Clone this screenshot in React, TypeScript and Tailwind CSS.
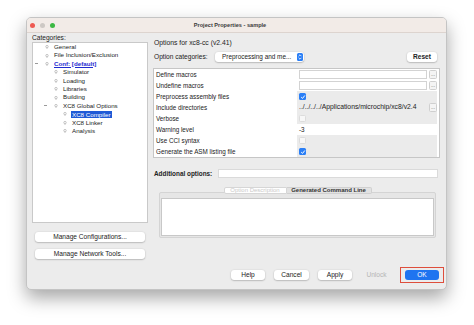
import React from "react"

type Node = { label: string; level: number; toggle?: boolean; link?: boolean; selected?: boolean }

const tree: Node[] = [
  { label: "General", level: 0 },
  { label: "File Inclusion/Exclusion", level: 0 },
  { label: "Conf: [default]", level: 0, toggle: true, link: true },
  { label: "Simulator", level: 1 },
  { label: "Loading", level: 1 },
  { label: "Libraries", level: 1 },
  { label: "Building", level: 1 },
  { label: "XC8 Global Options", level: 1, toggle: true },
  { label: "XC8 Compiler", level: 2, selected: true },
  { label: "XC8 Linker", level: 2 },
  { label: "Analysis", level: 2 },
]

const indent = ["pl-0", "pl-[9px]", "pl-[18px]"]

function TreeRow({ node }: { node: Node }) {
  return (
    <div className={`flex items-center h-[8.4px] ${indent[node.level]}`}>
      <span className="w-[7px] flex justify-center">
        {node.toggle && <span className="block w-[3px] h-[1px] bg-[#9a9a9a]" />}
      </span>
      <span className="w-[14px] flex">
        <svg viewBox="0 0 4 4" className="ml-[5px] w-[4px] h-[4px]">
          <circle cx="2" cy="1.6" r="1.2" stroke="#a0a0a0" strokeWidth="0.6" fill="none" />
          <path d="M2 2.8 V4" stroke="#a0a0a0" strokeWidth="0.5" />
        </svg>
      </span>
      <span
        className={
          node.selected
            ? "bg-[#1f5ad6] text-white px-[1px] -ml-[1px] leading-[7px]"
            : node.link
            ? "text-[#1f2bd0] font-bold underline"
            : "text-[#222]"
        }
      >
        {node.label}
      </span>
    </div>
  )
}

function Btn({ children, className = "" }: { children: React.ReactNode; className?: string }) {
  return (
    <div
      className={`h-[10px] flex items-center justify-center rounded-[3px] bg-white shadow-[0_0.5px_1.5px_rgba(0,0,0,0.35)] text-[6.6px] text-[#222] ${className}`}
    >
      {children}
    </div>
  )
}

function Check({ on }: { on: boolean }) {
  if (!on) return <span className="block w-[7px] h-[7px] rounded-[1.5px] bg-[#f7f7f7] border border-[#dcdcdc]" />
  return (
    <span className="flex w-[7px] h-[7px] rounded-[1.5px] bg-[#2b7ff6] items-center justify-center">
      <svg viewBox="0 0 6 6" className="w-[6px] h-[6px]">
        <path d="M1.2 3.1 L2.5 4.4 L4.8 1.5" stroke="white" strokeWidth="1" fill="none" />
      </svg>
    </span>
  )
}

function Dots() {
  return (
    <span className="ml-[2px] shrink-0 w-[8px] h-[9px] rounded-[1.5px] border border-[#cfcfcf] bg-[#f4f4f4] flex items-center justify-center text-[5px] leading-none text-[#555]">
      ...
    </span>
  )
}

function Field() {
  return (
    <div className="flex items-center w-full min-w-0">
      <span className="flex-1 h-[9px] bg-white border border-[#d3d3d3]" />
      <Dots />
    </div>
  )
}

type Prop = { name: string; kind: "field" | "check" | "text" | "dir"; on?: boolean; value?: string }

const props: Prop[] = [
  { name: "Define macros", kind: "field" },
  { name: "Undefine macros", kind: "field" },
  { name: "Preprocess assembly files", kind: "check", on: true },
  { name: "Include directories", kind: "dir", value: "../../../../Applications/microchip/xc8/v2.4" },
  { name: "Verbose", kind: "check", on: false },
  { name: "Warning level", kind: "text", value: "-3" },
  { name: "Use CCI syntax", kind: "check", on: false },
  { name: "Generate the ASM listing file", kind: "check", on: true },
]

function PropRow({ p }: { p: Prop }) {
  const grey = p.kind === "check" || p.kind === "dir"
  return (
    <div className="flex h-[11px]">
      <div className="w-[143px] shrink-0 pl-[2px] flex items-center text-[#222]">{p.name}</div>
      <div className={`flex-1 min-w-0 flex items-center pl-[2px] ${grey ? "bg-[#ebebeb]" : "bg-white"}`}>
        {p.kind === "field" && <Field />}
        {p.kind === "check" && <Check on={!!p.on} />}
        {p.kind === "text" && <span className="text-[#222]">{p.value}</span>}
        {p.kind === "dir" && (
          <div className="flex items-center w-full min-w-0">
            <span className="flex-1 min-w-0 overflow-hidden whitespace-nowrap text-[6.8px] text-[#222]">{p.value}</span>
            <Dots />
          </div>
        )}
      </div>
    </div>
  )
}

export default function App() {
  return (
    <div className="w-[474px] h-[325px] bg-white overflow-hidden font-['Liberation_Sans',Arial,sans-serif] text-black">
      <div className="ml-[26px] mt-[17px] w-[421px] h-[273px] rounded-[5px] bg-[#ececec] border border-[#c4c4c4] shadow-[0_8px_18px_rgba(0,0,0,0.35)] flex flex-col overflow-hidden">
        {/* title bar */}
        <div className="h-[15px] flex items-center pl-[3px] pr-[41px] bg-[#f2ebe7] border-b border-[#ddd4cf]">
          <div className="flex gap-[5px]">
            <span className="w-[5px] h-[5px] rounded-full bg-[#ee5a52]" />
            <span className="w-[5px] h-[5px] rounded-full bg-[#cdc8c4]" />
            <span className="w-[5px] h-[5px] rounded-full bg-[#3cb843]" />
          </div>
          <div className="flex-1 text-center text-[5.6px] font-bold text-[#3a3a3a]">Project Properties - sample</div>
        </div>

        <div className="flex-1 flex pl-[5px] pr-[6px] pb-[6px]">
          {/* left column */}
          <div className="w-[116px] shrink-0 flex flex-col">
            <div className="mt-[1px] h-[8px] leading-[8px] text-[6.6px] text-[#222]">Categories:</div>
            <div className="h-[181px] bg-white border border-[#c9c9c9] text-[6.2px] leading-[8.4px]">
              {tree.map((n) => (
                <TreeRow key={n.label} node={n} />
              ))}
            </div>
            <Btn className="mt-[9px] mx-[3px]">Manage Configurations...</Btn>
            <Btn className="mt-[7px] mx-[3px]">Manage Network Tools...</Btn>
          </div>

          {/* right column */}
          <div className="ml-[5px] flex-1 min-w-0 flex flex-col">
            <div className="mt-[6px] h-[8px] leading-[8px] pl-[1px] text-[6.8px] text-[#222]">Options for xc8-cc (v2.41)</div>
            <div className="mt-[5px] h-[10px] flex items-center">
              <span className="w-[62px] pl-[1px] text-[6.6px] text-[#222]">Option categories:</span>
              <div className="w-[89px] h-[10px] flex items-center rounded-[3px] bg-white shadow-[0_0.5px_1.5px_rgba(0,0,0,0.35)]">
                <span className="flex-1 pl-[7px] text-[6.4px] text-[#222] whitespace-nowrap">Preprocessing and me...</span>
                <span className="mr-[1px] w-[6px] h-[8px] rounded-[1.5px] bg-[#2b7ff6] flex items-center justify-center">
                  <svg viewBox="0 0 6 8" className="w-[6px] h-[8px]">
                    <path d="M1.6 3.2 L3 1.8 L4.4 3.2 M1.6 4.8 L3 6.2 L4.4 4.8" stroke="white" strokeWidth="0.8" fill="none" />
                  </svg>
                </span>
              </div>
              <Btn className="ml-auto mr-[3px] w-[30px] font-bold">Reset</Btn>
            </div>

            <div className="mt-[6px] h-[90px] border border-[#c6c6c6] bg-white text-[6.3px] pr-[2px]">
              {props.map((p) => (
                <PropRow key={p.name} p={p} />
              ))}
            </div>

            <div className="mt-[11px] h-[9px] flex items-center">
              <span className="w-[65px] pl-[1px] text-[6.4px] font-bold text-[#222]">Additional options:</span>
              <span className="flex-1 h-[9px] mr-[2px] bg-white border border-[#dadada]" />
            </div>

            <div className="mt-[9px] flex flex-col">
              <div className="relative z-10 flex justify-center pl-[2px] h-[7px]">
                <div className="w-[63px] flex items-center justify-center rounded-l-[2px] bg-white border border-[#d6d6d6] text-[6px] text-[#c9c9c9]">
                  Option Description
                </div>
                <div className="w-[85px] flex items-center justify-center rounded-r-[2px] bg-[#e2e2e2] border border-l-0 border-[#d0d0d0] text-[6px] font-bold text-[#333]">
                  Generated Command Line
                </div>
              </div>
              <div className="-mt-[2px] ml-[6px] mr-[4px] pt-[5px] pb-[1px] px-[1px] bg-[#e6e6e6] border border-[#d4d4d4] rounded-[2px]">
                <div className="h-[38px] bg-white border border-[#c8c8c8]" />
              </div>
            </div>

            <div className="mt-auto flex items-center justify-end">
              <Btn className="w-[34px]">Help</Btn>
              <Btn className="ml-[9px] w-[35px]">Cancel</Btn>
              <Btn className="ml-[9px] w-[34px]">Apply</Btn>
              <div className="ml-[10px] w-[29px] h-[10px] flex items-center justify-center text-[6.6px] text-[#b5b5b5]">Unlock</div>
              <div className="ml-[9px] -mr-[4px] py-[2px] px-[4px] border border-[#de4e3c]">
                <div className="w-[34px] h-[10px] rounded-[3px] bg-[#1f74f0] flex items-center justify-center text-[6.6px] text-white">OK</div>
              </div>
            </div>
          </div>
        </div>
      </div>
    </div>
  )
}
